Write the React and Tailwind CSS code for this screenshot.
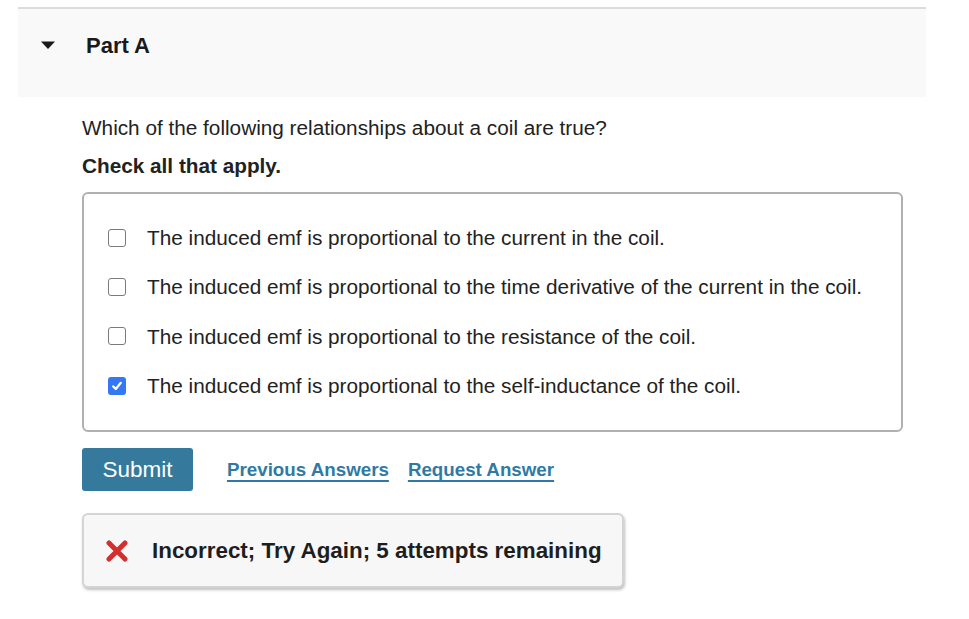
export default function App() {
    const options = [
        { text: "The induced emf is proportional to the current in the coil.", checked: false },
        { text: "The induced emf is proportional to the time derivative of the current in the coil.", checked: false },
        { text: "The induced emf is proportional to the resistance of the coil.", checked: false },
        { text: "The induced emf is proportional to the self-inductance of the coil.", checked: true }
    ];

    return (
        <div className="min-h-[619px] bg-white pt-[7px] pl-[18px] text-[#222]" style={{ fontFamily: '"Liberation Sans", Arial, sans-serif' }}>
            <div className="w-[908px]">
                {/* header */}
                <div className="flex h-[90px] items-center border-t-2 border-[#dcdcdc] bg-[#f9f9f9] pb-[16px]">
                    <svg width="16" height="10" viewBox="0 0 16 10" className="ml-[22px]">
                        <path d="M1 1.5 L15 1.5 L8 9 Z" fill="#1a1a1a" />
                    </svg>
                    <h2 className="ml-[30px] text-[22px] font-bold text-[#1a1a1a]">Part A</h2>
                </div>

                {/* body */}
                <div className="pl-[64px] pt-[19px]">
                    <p className="text-[20.75px] leading-[24px] text-[#222]">
                        Which of the following relationships about a coil are true?
                    </p>
                    <p className="mt-[14px] text-[20.75px] font-bold leading-[24px] text-[#222]">
                        Check all that apply.
                    </p>

                    <div className="mt-[14px] flex w-[821px] flex-col rounded-[6px] border-2 border-[#b0b0b0] px-[24px] pt-[19px] pb-[20px]">
                        {options.map((opt) => (
                            <label key={opt.text} className="flex h-[49.3px] shrink-0 items-center">
                                {opt.checked ? (
                                    <span className="flex h-[18px] w-[18px] items-center justify-center rounded-[3px] bg-[#3478f6]">
                                        <svg width="12" height="12" viewBox="0 0 12 12">
                                            <path d="M2.2 6.4 L4.8 9 L9.8 2.8" fill="none" stroke="#fff" strokeWidth="2.2" strokeLinecap="round" strokeLinejoin="round" />
                                        </svg>
                                    </span>
                                ) : (
                                    <span className="h-[18px] w-[18px] rounded-[3px] border-[1.5px] border-[#7a7a7a] bg-white" />
                                )}
                                <span className="ml-[21px] text-[20.75px] text-[#222]">{opt.text}</span>
                            </label>
                        ))}
                    </div>

                    <div className="mt-[16px] flex items-center">
                        <button className="h-[43px] w-[111px] rounded-[3px] bg-[#357a9c] text-[22.5px] text-white">
                            Submit
                        </button>
                        <a href="#" className="ml-[34px] text-[18.75px] font-bold text-[#2f7aa4] underline decoration-2 underline-offset-[4px]">
                            Previous Answers
                        </a>
                        <a href="#" className="ml-[19px] text-[18.75px] font-bold text-[#2f7aa4] underline decoration-2 underline-offset-[4px]">
                            Request Answer
                        </a>
                    </div>

                    <div className="mt-[22px] flex h-[75px] w-[542px] items-center rounded-[6px] border-2 border-[#d4d4d4] bg-[#f7f7f7] shadow-[1px_2px_3px_rgba(0,0,0,0.25)]">
                        <svg width="22" height="22" viewBox="0 0 22 22" className="ml-[22px]">
                            <path d="M3 3 L19 19 M19 3 L3 19" stroke="#d32f2f" strokeWidth="5" strokeLinecap="round" />
                        </svg>
                        <span className="ml-[24px] text-[22.4px] font-bold text-[#1e1e1e]">
                            Incorrect; Try Again; 5 attempts remaining
                        </span>
                    </div>
                </div>
            </div>
        </div>
    );
}
